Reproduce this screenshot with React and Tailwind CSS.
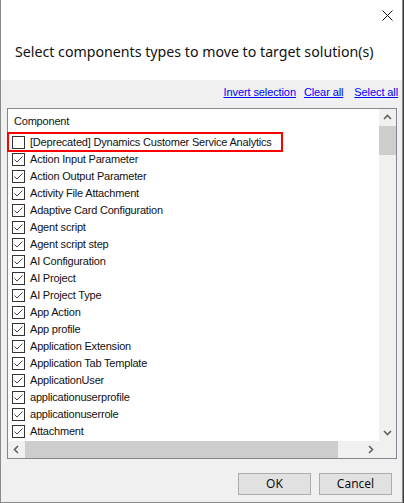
import React from "react";

const items = [
  ["[Deprecated] Dynamics Customer Service Analytics", false],
  ["Action Input Parameter", true],
  ["Action Output Parameter", true],
  ["Activity File Attachment", true],
  ["Adaptive Card Configuration", true],
  ["Agent script", true],
  ["Agent script step", true],
  ["AI Configuration", true],
  ["AI Project", true],
  ["AI Project Type", true],
  ["App Action", true],
  ["App profile", true],
  ["Application Extension", true],
  ["Application Tab Template", true],
  ["ApplicationUser", true],
  ["applicationuserprofile", true],
  ["applicationuserrole", true],
  ["Attachment", true],
];

function Check({ checked }) {
  return (
    <div className="w-[13px] h-[13px] border border-[#333333] bg-white shrink-0 flex items-center justify-center">
      {checked && (
        <svg width="11" height="11" viewBox="0 0 11 11">
          <polyline points="1.5,5.5 4,8 9.5,2.5" fill="none" stroke="#444" strokeWidth="1" />
        </svg>
      )}
    </div>
  );
}

function Chevron({ dir }) {
  const pts = {
    up: "1,6 4.5,2.5 8,6",
    down: "1,3 4.5,6.5 8,3",
    left: "6,1 2.5,4.5 6,8",
    right: "3,1 6.5,4.5 3,8",
  }[dir];
  return (
    <svg width="9" height="9" viewBox="0 0 9 9">
      <polyline points={pts} fill="none" stroke="#606060" strokeWidth="1.6" />
    </svg>
  );
}

export default function App() {
  const sans = { fontFamily: '"Liberation Sans", Arial, sans-serif' };
  return (
    <div className="w-[404px] h-[503px] bg-[#3c3c3c] overflow-hidden">
      <div className="w-[403px] h-[503px] border-l border-r border-b border-[#8a8a8a] bg-[#f0f0f0] flex flex-col">
        {/* Header */}
        <div className="h-[80px] bg-white flex flex-col">
          <div className="h-[30px] flex justify-end items-center pr-[9px]">
            <svg width="11" height="11" viewBox="0 0 11 11">
              <path d="M0.5 0.5 L10.5 10.5 M10.5 0.5 L0.5 10.5" stroke="#111" strokeWidth="1" />
            </svg>
          </div>
          <div
            className="pt-[12px] pl-[14px] text-[14.2px] leading-[20px] text-[#111]"
            style={{ fontFamily: '"Noto Sans", "Open Sans", sans-serif' }}
          >
            Select components types to move to target solution(s)
          </div>
        </div>

        {/* Body */}
        <div className="flex-1 flex flex-col pt-[5px]" style={sans}>
          <div className="h-[14px] flex justify-end items-center pr-[4px] text-[11px] leading-[14px] tracking-[-0.1px] text-[#0000ff]">
            <span className="underline">Invert selection</span>
            <span className="underline ml-[8px]">Clear all</span>
            <span className="underline ml-[11px]">Select all</span>
          </div>

          <div className="mt-[9px] ml-[6px] w-[390px] h-[351px] border border-[#828790] bg-white flex flex-col">
            <div className="flex flex-1">
              <div className="flex-1 relative pl-[4px]">
                <div className="h-[25px] flex items-center pl-[2px] text-[11px] tracking-[-0.2px] text-[#111]">Component</div>
                {items.map(([label, checked]) => (
                  <div key={label} className="h-[17px] flex items-center gap-[5px] text-[11px] tracking-[-0.2px] text-[#111] whitespace-nowrap">
                    <Check checked={checked} />
                    <span>{label}</span>
                  </div>
                ))}
                <div className="absolute left-[-1px] top-[23px] w-[276px] h-[20px] border-2 border-[#ff0000]" />
              </div>
              <div className="w-[17px] bg-[#f0f0f0] flex flex-col">
                <div className="h-[17px] flex items-center justify-center">
                  <Chevron dir="up" />
                </div>
                <div className="h-[29px] bg-[#cdcdcd]" />
                <div className="flex-1" />
                <div className="h-[17px] flex items-center justify-center">
                  <Chevron dir="down" />
                </div>
              </div>
            </div>
            <div className="h-[17px] flex bg-[#f0f0f0]">
              <div className="w-[17px] flex items-center justify-center">
                <Chevron dir="left" />
              </div>
              <div className="w-[313px] bg-[#cdcdcd]" />
              <div className="flex-1" />
              <div className="w-[17px] flex items-center justify-center">
                <Chevron dir="right" />
              </div>
              <div className="w-[17px]" />
            </div>
          </div>

          <div className="mt-[14px] flex justify-end gap-[8px] pr-[10px]">
            <button
              className="w-[73px] h-[22px] border border-[#adadad] bg-[#e1e1e1] text-[12px] text-[#111]"
              style={{ fontFamily: '"Noto Sans", sans-serif' }}
            >
              OK
            </button>
            <button
              className="w-[73px] h-[22px] border border-[#adadad] bg-[#e1e1e1] text-[12px] text-[#111]"
              style={{ fontFamily: '"Noto Sans", sans-serif' }}
            >
              Cancel
            </button>
          </div>
        </div>
      </div>
    </div>
  );
}
